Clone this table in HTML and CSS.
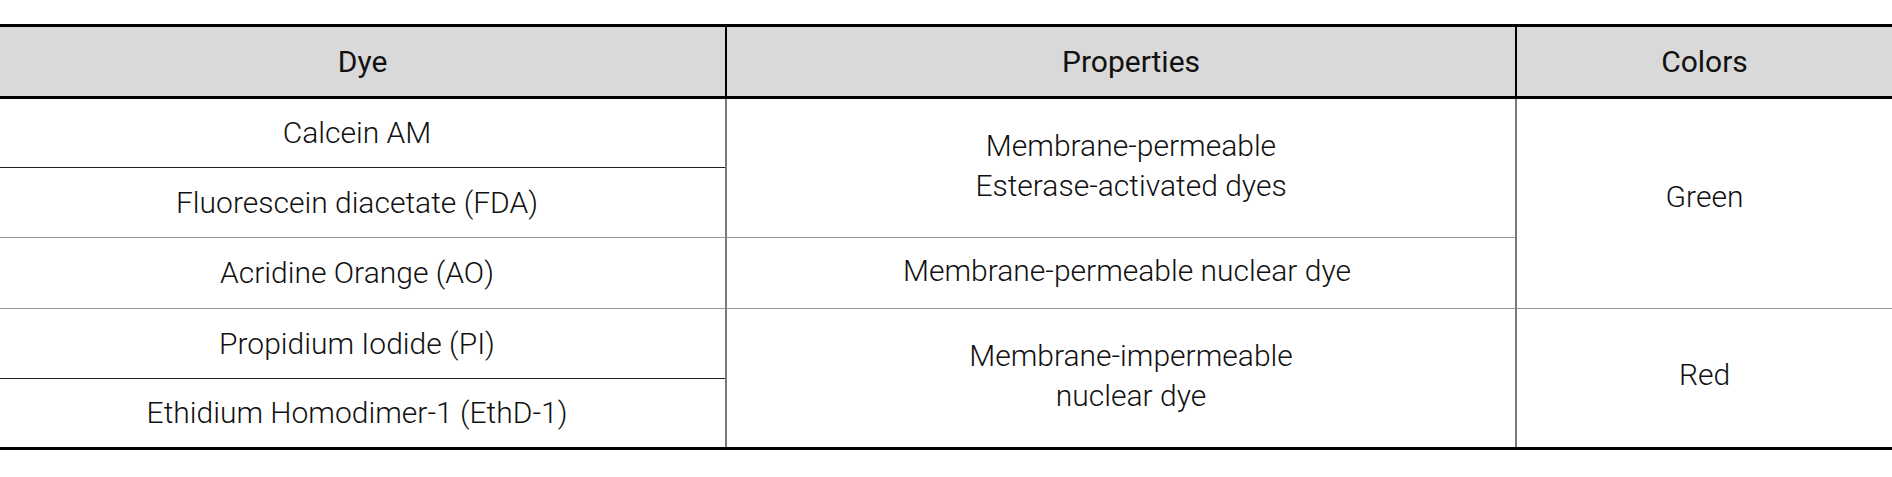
FILE: index.html
```html
<!DOCTYPE html>
<html>
<head>
<meta charset="utf-8">
<link rel="stylesheet" href="styles.css">
</head>
<body>
<div class="wrap">
  <div class="dyes">
    <div class="cell head c-dye">Dye</div>
    <div class="cell head c-prop">Properties</div>
    <div class="cell head c-color">Colors</div>

    <div class="cell dye r1 dark">Calcein AM</div>
    <div class="cell prop r1-2 multi">Membrane-permeable<br>Esterase-activated dyes</div>
    <div class="cell color r1-3 green">Green</div>

    <div class="cell dye r2">Fluorescein diacetate (FDA)</div>

    <div class="cell dye r3">Acridine Orange (AO)</div>
    <div class="cell prop r3 single">Membrane-permeable nuclear dye</div>

    <div class="cell dye r4 dark">Propidium Iodide (PI)</div>
    <div class="cell prop r4-5 multi last">Membrane-impermeable<br>nuclear dye</div>
    <div class="cell color r4-5 red last">Red</div>

    <div class="cell dye r5 last">Ethidium Homodimer-1 (EthD-1)</div>
  </div>
</div>
</body>
</html>
```

FILE: styles.css
```css
html, body {
  margin: 0;
  padding: 0;
  background: #ffffff;
}

.wrap {
  padding-top: 24px;
}

.dyes {
  width: 1892px;
  display: grid;
  grid-template-columns: 725px 790px 377px;
  grid-template-rows: 72px 69px 70px 71px 70px 68px;
  border-top: 3px solid #000;
  border-bottom: 3px solid #000;
  font-family: Roboto, "Liberation Sans", sans-serif;
  color: #111;
  font-size: 30px;
}

.cell {
  display: flex;
  align-items: center;
  justify-content: center;
  text-align: center;
  box-sizing: border-box;
  border-bottom: 1px solid #999;
  line-height: 40px;
  font-weight: 300;
}

.cell.last {
  border-bottom: none;
}

.head {
  grid-row: 1;
  background: #d9d9d9;
  font-weight: 400;
  border-bottom: 3px solid #000;
}

.head.c-prop,
.head.c-color {
  border-left: 2px solid #000;
}

.head.c-prop {
  padding-left: 20px;
}

.dye {
  grid-column: 1;
  padding-right: 11px;
}

.prop {
  grid-column: 2;
  border-left: 2px solid #7a7a7a;
  padding-bottom: 4px;
}

.prop.multi {
  padding-left: 20px;
}

.prop.single {
  padding-left: 12px;
}

.color {
  grid-column: 3;
  border-left: 2px solid #7a7a7a;
}

.color.green {
  padding-bottom: 14px;
}

.color.red {
  padding-bottom: 6px;
}

.dye.dark {
  border-bottom-color: #222;
}

.r1 { grid-row: 2; }
.r2 { grid-row: 3; }
.r3 { grid-row: 4; }
.r4 { grid-row: 5; }
.r5 { grid-row: 6; }
.r1-2 { grid-row: 2 / span 2; }
.r1-3 { grid-row: 2 / span 3; }
.r4-5 { grid-row: 5 / span 2; }
```
